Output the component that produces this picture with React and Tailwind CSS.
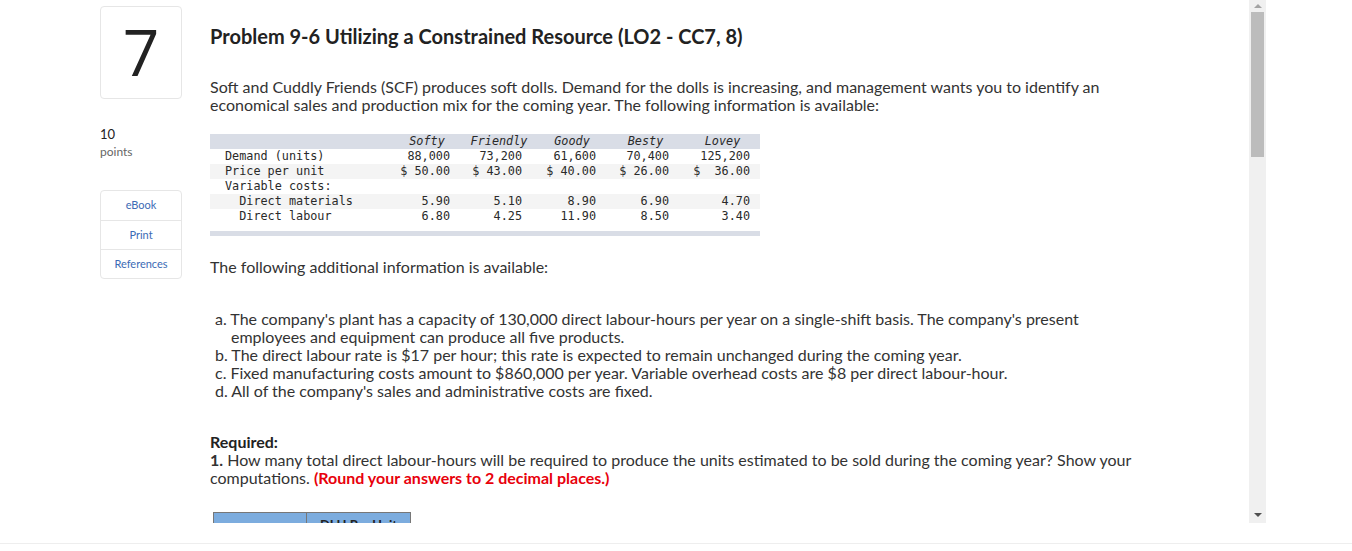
import React from "react";

const rows = [
  { label: "Demand (units)", vals: ["88,000", "73,200", "61,600", "70,400", "125,200"], shade: false },
  { label: "Price per unit", vals: ["$ 50.00", "$ 43.00", "$ 40.00", "$ 26.00", "$  36.00"], shade: true },
  { label: "Variable costs:", vals: ["", "", "", "", ""], shade: false },
  { label: "  Direct materials", vals: ["5.90", "5.10", "8.90", "6.90", "4.70"], shade: true },
  { label: "  Direct labour", vals: ["6.80", "4.25", "11.90", "8.50", "3.40"], shade: false },
];

const heads = ["Softy", "Friendly", "Goody", "Besty", "Lovey"];
const colW = ["w-[72px]", "w-[72px]", "w-[74px]", "w-[73px]", "w-[81px]"];

function DataTable() {
  return (
    <div className="w-[550px] font-['DejaVu_Sans_Mono',monospace] text-[11.8px] leading-[15px] text-[#2a2a2a]">
      <div className="flex bg-[#d9dde6] h-[15px]">
        <div className="w-[178px]" />
        {heads.map((h, i) => (
          <div key={h} className={`${colW[i]} text-center italic pl-[6px]`}>
            {h}
          </div>
        ))}
      </div>
      {rows.map((r) => (
        <div key={r.label} className={`flex h-[15px] ${r.shade ? "bg-[#f4f4f4]" : "bg-white"}`}>
          <div className="w-[178px] pl-[15px] whitespace-pre">{r.label}</div>
          {r.vals.map((v, i) => (
            <div key={i} className={`${colW[i]} text-right pr-[10px] whitespace-pre`}>
              {v}
            </div>
          ))}
        </div>
      ))}
      <div className="h-[7px]" />
      <div className="h-[5px] bg-[#d9dde6]" />
    </div>
  );
}

export default function App() {
  return (
    <div className="w-full h-[551px] bg-white flex flex-col font-['Lato',sans-serif] text-[#333] overflow-hidden">
      <div className="h-[523px] flex">
        <div className="flex-1 overflow-hidden pl-[100px] pt-[6px] flex">
          {/* left rail */}
          <div className="w-[82px] shrink-0">
            <div className="h-[93px] border border-[#e6e6e6] rounded-[4px] flex items-center justify-center">
              <span className="text-[64px] leading-none text-[#222] font-['Open_Sans',sans-serif] -mt-[2px]">7</span>
            </div>
            <div className="mt-[28px] text-[13px] leading-[15px] text-[#222]">10</div>
            <div className="mt-[3px] text-[12px] leading-[14px] text-[#666]">points</div>
            <div className="mt-[31px] border border-[#e6e6e6] rounded-[4px] text-[11px] text-[#3c6bb5]">
              <div className="h-[30px] flex items-center justify-center border-b border-[#e6e6e6]">eBook</div>
              <div className="h-[29px] flex items-center justify-center border-b border-[#e6e6e6]">Print</div>
              <div className="h-[28px] flex items-center justify-center">References</div>
            </div>
          </div>

          {/* question body */}
          <div className="ml-[28px] flex-1">
            <h1 className="mt-[18px] text-[20px] leading-[24px] font-bold text-[#222]">
              Problem 9-6 Utilizing a Constrained Resource (LO2 - CC7, 8)
            </h1>
            <p className="mt-[30px] text-[16px] leading-[18px] max-w-[930px]">
              Soft and Cuddly Friends (SCF) produces soft dolls. Demand for the dolls is increasing, and management wants you to identify an economical sales and production mix for the coming year. The following information is available:
            </p>
            <div className="mt-[20px]">
              <DataTable />
            </div>
            <p className="mt-[22px] text-[16px] leading-[18px]">The following additional information is available:</p>
            <ul className="mt-[34px] ml-[5px] text-[16px] leading-[18px] max-w-[900px]">
              <li className="pl-[16px] -indent-[16px]">
                a. The company's plant has a capacity of 130,000 direct labour-hours per year on a single-shift basis. The company's present employees and equipment can produce all five products.
              </li>
              <li className="pl-[16px] -indent-[16px]">b. The direct labour rate is $17 per hour; this rate is expected to remain unchanged during the coming year.</li>
              <li className="pl-[16px] -indent-[16px]">c. Fixed manufacturing costs amount to $860,000 per year. Variable overhead costs are $8 per direct labour-hour.</li>
              <li className="pl-[16px] -indent-[16px]">d. All of the company's sales and administrative costs are fixed.</li>
            </ul>
            <div className="mt-[33px] text-[16px] leading-[18px] max-w-[940px]">
              <div className="font-bold text-[#222]">Required:</div>
              <p>
                <span className="font-bold">1.</span> How many total direct labour-hours will be required to produce the units estimated to be sold during the coming year? Show your computations.{" "}
                <span className="font-bold text-[#e8000b]">(Round your answers to 2 decimal places.)</span>
              </p>
            </div>
            <div className="mt-[25px] ml-[3px] w-[198px] flex border border-[#777] bg-[#7cacde] h-[30px] text-[13px] font-bold text-[#222]">
              <div className="w-[93px] border-r border-[#777]" />
              <div className="flex-1 text-center pt-[3px]">DLH Per Unit</div>
            </div>
          </div>
        </div>

        {/* scrollbar */}
        <div className="w-[17px] bg-[#f0f0f0] flex flex-col items-center mr-[86px]">
          <div className="h-[12px] flex items-center justify-center">
            <div className="w-0 h-0 border-l-[4px] border-r-[4px] border-b-[4px] border-l-transparent border-r-transparent border-b-[#a3a3a3]" />
          </div>
          <div className="w-[13px] h-[145px] bg-[#bcbcbc]" />
          <div className="flex-1" />
          <div className="h-[17px] flex items-center justify-center">
            <div className="w-0 h-0 border-l-[4px] border-r-[4px] border-t-[4px] border-l-transparent border-r-transparent border-t-[#505050]" />
          </div>
        </div>
      </div>
      <div className="h-[21px] border-b border-[#eeeeee]" />
    </div>
  );
}
